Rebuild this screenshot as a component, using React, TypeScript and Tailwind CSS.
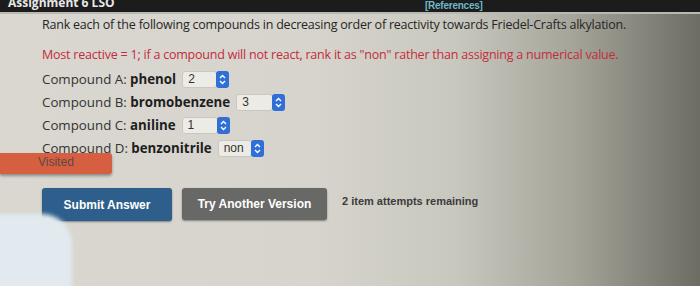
import React from 'react';

const Stepper: React.FC<{ value: string; width: string }> = ({ value, width }) => {
    return (
        <span className="inline-flex items-center ml-[6px] h-[17px]">
            <span className={`h-[17px] ${width} rounded-[3px] border border-[#c9c7c0] bg-[#ecebe6] text-[12px] leading-[15px] pl-[5px] text-[#333] font-['Liberation_Sans',sans-serif]`}>
                {value}
            </span>
            <span className="-ml-[1px] w-[13px] h-[17px] rounded-[3px] bg-[#2f6fd6] flex flex-col items-center justify-center">
                <svg width="7" height="11" viewBox="0 0 7 11">
                    <path d="M1 4 L3.5 1.5 L6 4" stroke="white" strokeWidth="1.4" fill="none" />
                    <path d="M1 7 L3.5 9.5 L6 7" stroke="white" strokeWidth="1.4" fill="none" />
                </svg>
            </span>
        </span>
    );
};

const compounds = [
    { label: 'A', name: 'phenol', value: '2', width: 'w-[35px]' },
    { label: 'B', name: 'bromobenzene', value: '3', width: 'w-[37px]' },
    { label: 'C', name: 'aniline', value: '1', width: 'w-[36px]' },
    { label: 'D', name: 'benzonitrile', value: 'non', width: 'w-[34px]' },
];

export default function App() {
    return (
        <div className="relative w-[700px] h-[286px] overflow-hidden bg-[linear-gradient(90deg,#d9d7d0_0%,#d6d4cc_45%,#c9c8bf_65%,#a4a499_82%,#6c6c63_100%)] font-['Open_Sans',sans-serif]">
            {/* top bar */}
            <div className="h-[12px] bg-[#1c1c1c] relative overflow-hidden">
                <span className="absolute left-[8px] -top-[4px] text-[12px] leading-[14px] font-bold text-[#e8e8e8]">Assignment 6 LSO</span>
                <span className="absolute left-[425px] top-[-1px] text-[10px] leading-[13px] font-bold text-[#6fb8c8] font-['Liberation_Sans',sans-serif] tracking-tight">[References]</span>
            </div>
            <div className="h-[2px] bg-[#b9b8b2]" />

            <div className="pl-[42px]">
                <p className="text-[12.5px] leading-[22px] text-[#262626] tracking-[-0.22px]">
                    Rank each of the following compounds in decreasing order of reactivity towards Friedel-Crafts alkylation.
                </p>
                <p className="mt-[7px] text-[12.5px] leading-[24px] text-[#c42c3c] tracking-[-0.22px]">
                    Most reactive = 1; if a compound will not react, rank it as "non" rather than assigning a numerical value.
                </p>

                <div className="mt-[4px] flex flex-col gap-[6px]">
                    {compounds.map((c) => (
                        <div key={c.label} className="flex items-center h-[17px] text-[13.3px] text-[#333]">
                            <span>Compound {c.label}:&nbsp;</span>
                            <span className="font-bold text-[#1e1e1e]">{c.name}</span>
                            <Stepper value={c.value} width={c.width} />
                        </div>
                    ))}
                </div>

                <div className="mt-[31px] flex items-center">
                    <button className="w-[130px] h-[33px] rounded-[3px] bg-[#2e5f8c] text-white text-[12px] font-bold font-['Liberation_Sans',sans-serif] shadow-[0_1px_2px_rgba(0,0,0,0.4)]">
                        Submit Answer
                    </button>
                    <button className="ml-[10px] w-[145px] h-[32px] -mt-[2px] rounded-[3px] bg-[#686866] text-white text-[12px] font-bold font-['Liberation_Sans',sans-serif] shadow-[0_1px_2px_rgba(0,0,0,0.4)]">
                        Try Another Version
                    </button>
                    <span className="ml-[15px] -mt-[6px] text-[11px] font-bold text-[#3c3c3c] font-['Liberation_Sans',sans-serif]">
                        2 item attempts remaining
                    </span>
                </div>
            </div>

            {/* visited tab */}
            <div className="absolute left-0 top-[153px] w-[112px] h-[21px] rounded-r-[3px] bg-[#d65f42] shadow-[0_2px_3px_rgba(0,0,0,0.35)] pl-[38px] text-[12px] leading-[19px] text-[#5a4a44] font-['Liberation_Sans',sans-serif]">
                Visited
            </div>

            {/* screen glare */}
            <div className="absolute -left-[20px] top-[214px] w-[92px] h-[90px] rounded-tr-[30px] bg-[#e2eaef] blur-[2px]" />
        </div>
    );
}
